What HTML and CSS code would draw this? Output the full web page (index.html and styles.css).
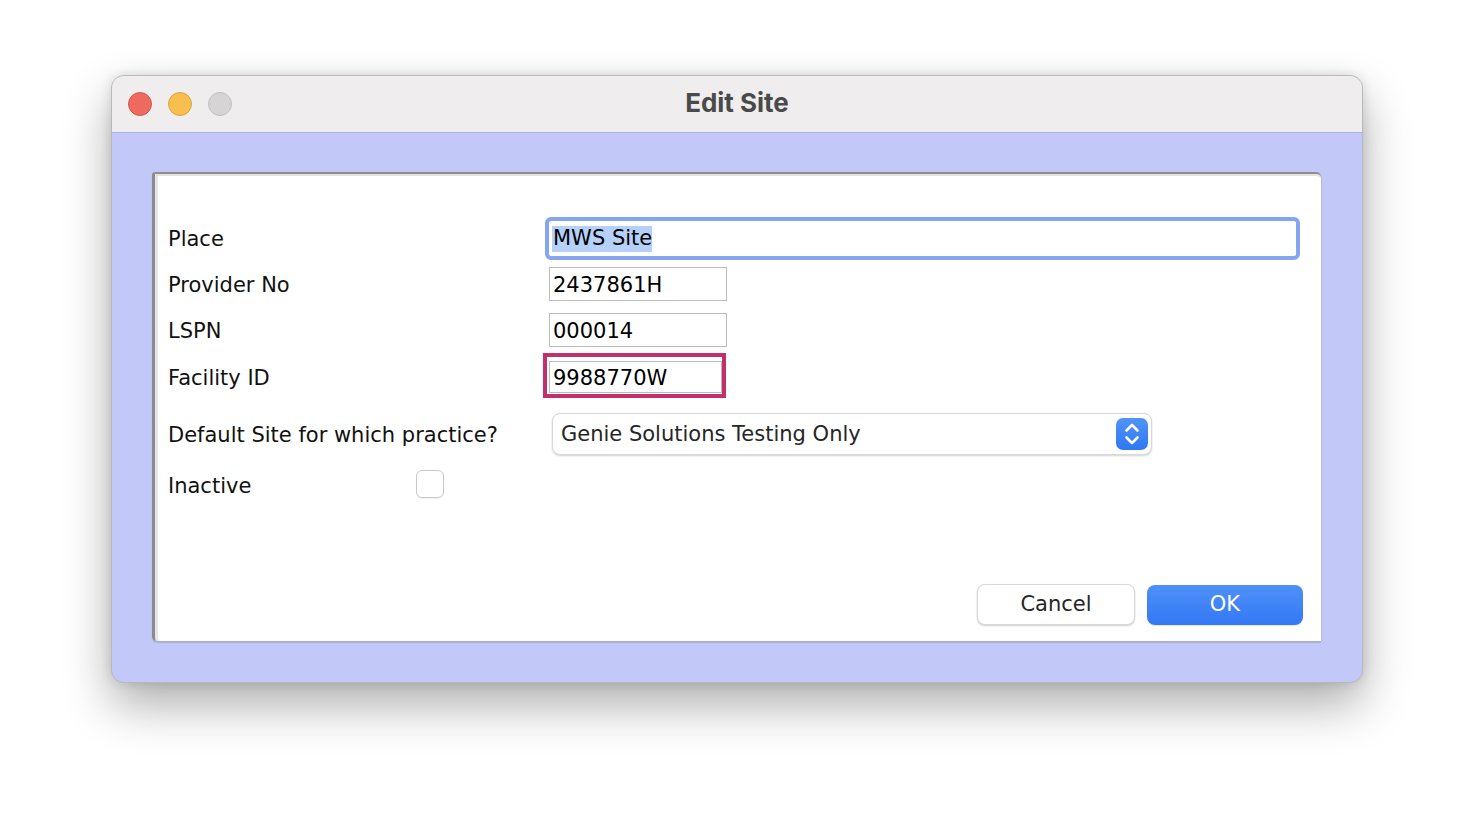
FILE: index.html
```html
<!DOCTYPE html>
<html lang="en">
<head>
<meta charset="utf-8">
<title>Edit Site</title>
<link rel="stylesheet" href="styles.css">
</head>
<body>
<div class="window">
  <div class="titlebar">
    <div class="lights">
      <span class="light red"></span>
      <span class="light yellow"></span>
      <span class="light gray"></span>
    </div>
    <div class="title">Edit Site</div>
  </div>
  <div class="body">
    <div class="panel">
      <div class="form">
        <div class="row row-place">
          <div class="label">Place</div>
          <div class="field field-focus"><span class="sel">MWS Site</span></div>
        </div>
        <div class="row row-provider">
          <div class="label">Provider No</div>
          <div class="field field-small">2437861H</div>
        </div>
        <div class="row row-lspn">
          <div class="label">LSPN</div>
          <div class="field field-small">000014</div>
        </div>
        <div class="row row-facility">
          <div class="label label-low">Facility ID</div>
          <div class="highlight">
            <div class="field field-facility">9988770W</div>
          </div>
        </div>
        <div class="row row-select">
          <div class="label">Default Site for which practice?</div>
          <div class="select">
            <span class="select-text">Genie Solutions Testing Only</span>
            <span class="stepper">
              <svg width="32" height="32" viewBox="0 0 32 32" fill="none" stroke="#fff" stroke-width="2.6" stroke-linecap="round" stroke-linejoin="round">
                <polyline points="10.5,12.5 16,7 21.5,12.5"/>
                <polyline points="10.5,19.5 16,25 21.5,19.5"/>
              </svg>
            </span>
          </div>
        </div>
        <div class="row row-inactive">
          <div class="label label-short">Inactive</div>
          <span class="checkbox"></span>
        </div>
      </div>
      <div class="buttons">
        <button class="btn btn-cancel">Cancel</button>
        <button class="btn btn-ok">OK</button>
      </div>
    </div>
  </div>
</div>
</body>
</html>
```

FILE: styles.css
```css
* { box-sizing: border-box; }

html, body {
  margin: 0;
  padding: 0;
  background: #ffffff;
}

body {
  width: 1474px;
  height: 830px;
  overflow: hidden;
  font-family: "DejaVu Sans", "Liberation Sans", sans-serif;
}

.window {
  margin: 75px 0 0 111px;
  width: 1252px;
  height: 608px;
  border-radius: 13px;
  border: 1px solid #b9b9bb;
  background: #c2c8f8;
  box-shadow: 0 22px 48px rgba(0, 0, 0, 0.32), 0 0 12px rgba(0, 0, 0, 0.12);
  overflow: hidden;
  display: flex;
  flex-direction: column;
}

.titlebar {
  height: 57px;
  flex: 0 0 57px;
  background: #efedee;
  border-bottom: 1px solid #a9b1ec;
  display: flex;
  align-items: center;
  position: relative;
}

.lights {
  display: flex;
  gap: 16px;
  padding-left: 16px;
}

.light {
  width: 24px;
  height: 24px;
  border-radius: 50%;
  display: block;
}
.light.red { background: #ee6a5f; border: 1px solid #d6564b; }
.light.yellow { background: #f6bf4f; border: 1px solid #dca53a; }
.light.gray { background: #d6d4d5; border: 1px solid #c1bfc0; }

.title {
  position: absolute;
  left: 0;
  right: 0;
  top: 0;
  bottom: 0;
  display: flex;
  align-items: center;
  justify-content: center;
  font-family: "Inter", "Roboto", sans-serif;
  font-weight: 700;
  font-size: 26px;
  color: #4a4a4a;
  padding-bottom: 3px;
  pointer-events: none;
}

.body {
  flex: 1;
  padding: 39px 41px 41px 40px;
}

.panel {
  width: 1169px;
  height: 469px;
  background: #ffffff;
  border-top: 2px solid #8e8e8e;
  border-left: 3px solid #8b8b8b;
  border-radius: 3px 5px 0 5px;
  box-shadow: inset 0 2px 0 #e3e3e3, inset 3px 0 0 #e6e6e6, 0 2px 1px rgba(0,0,0,0.12), 1px 0 1px rgba(0,0,0,0.06);
  display: flex;
  flex-direction: column;
  padding: 43px 18px 16px 13px;
}

.form {
  display: flex;
  flex-direction: column;
}

.row {
  display: flex;
  align-items: center;
}

.label {
  flex: 0 0 377px;
  font-size: 21px;
  color: #111;
  line-height: 1;
  padding-top: 2px;
}

.label-low { padding-top: 6px; }
.label-short { flex: 0 0 248px; padding-top: 6px; }

.row-place { height: 43px; }
.row-provider { margin-top: 7px; height: 34px; }
.row-lspn { margin-top: 12px; height: 34px; }
.row-facility { margin-top: 6px; height: 45px; }
.row-select { margin-top: 15px; height: 42px; }
.row-inactive { margin-top: 15px; height: 27px; }

.field {
  font-size: 21px;
  color: #000;
  background: #fff;
  display: flex;
  align-items: center;
  white-space: nowrap;
}

.field-focus {
  width: 755px;
  height: 43px;
  border: 4px solid #86a5f1;
  border-radius: 6px;
  padding-left: 3px;
}

.sel {
  background: #b5d1fa;
  padding: 2px 0 3px 1px;
  line-height: 1;
}

.field-small {
  margin-left: 4px;
  width: 178px;
  height: 34px;
  border: 1px solid #bcbcbc;
  padding-left: 3px;
  padding-top: 1px;
}

.highlight {
  margin-left: -2px;
  width: 183px;
  height: 45px;
  border: 4px solid #c2306b;
  padding: 4px 0 0 2px;
}

.field-facility {
  width: 173px;
  height: 32px;
  border: 1px solid #bcbcbc;
  padding-left: 3px;
  padding-top: 1px;
}

.select {
  margin-left: 7px;
  width: 600px;
  height: 42px;
  border: 1px solid #d8d8d8;
  border-radius: 8px;
  background: #fff;
  box-shadow: 0 1px 2px rgba(0, 0, 0, 0.18);
  display: flex;
  align-items: center;
  justify-content: space-between;
  padding: 0 3px 0 8px;
}

.select-text {
  font-size: 21px;
  color: #262626;
  line-height: 1;
}

.stepper {
  width: 32px;
  height: 32px;
  border-radius: 7px;
  background: linear-gradient(#5094f8, #2f77f2);
  display: flex;
}

.checkbox {
  width: 28px;
  height: 28px;
  border: 1px solid #c9c9c9;
  border-radius: 6px;
  background: #fff;
  box-shadow: 0 1px 1px rgba(0, 0, 0, 0.06);
  display: block;
}

.buttons {
  margin-top: auto;
  display: flex;
  justify-content: flex-end;
  align-items: center;
  gap: 12px;
}

.btn {
  font-family: "DejaVu Sans", "Liberation Sans", sans-serif;
  font-size: 21px;
  border-radius: 8px;
  cursor: default;
  padding: 0;
  line-height: 1;
}

.btn-cancel {
  width: 158px;
  height: 41px;
  background: #fff;
  color: #262626;
  border: 1px solid #d9d9d9;
  box-shadow: 0 1px 2px rgba(0, 0, 0, 0.2);
}

.btn-ok {
  width: 156px;
  height: 40px;
  background: linear-gradient(#4f90f8, #3378f5);
  color: #fff;
  border: none;
  box-shadow: 0 1px 1px rgba(0, 0, 0, 0.1);
}
```
